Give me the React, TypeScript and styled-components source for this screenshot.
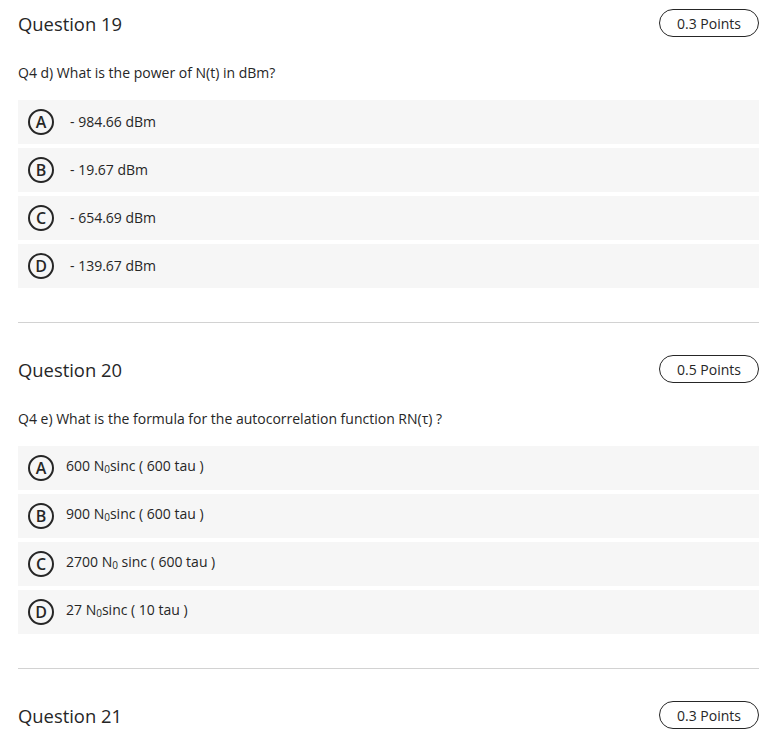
import React from 'react';
import styled, { createGlobalStyle } from 'styled-components';

const GlobalStyle = createGlobalStyle`
    body {
        margin: 0;
        background: #fff;
        font-family: "Open Sans", "Liberation Sans", sans-serif;
        color: #262626;
    }
`;

const Page = styled.div`
    padding: 9px 21px 0 18px;
    display: flex;
    flex-direction: column;
`;

const Section = styled.section`
    display: flex;
    flex-direction: column;
`;

const Header = styled.div`
    display: flex;
    align-items: center;
    justify-content: space-between;
    height: 28px;
`;

const Title = styled.h2`
    margin: 0;
    font-size: 18.4px;
    font-weight: 400;
    color: #262626;
`;

const Points = styled.span`
    box-sizing: border-box;
    width: 100px;
    height: 28px;
    border: 1px solid #262626;
    border-radius: 14px;
    display: flex;
    align-items: center;
    justify-content: center;
    font-size: 14px;
    color: #262626;
`;

const Prompt = styled.p`
    margin: 26px 0 17px;
    font-size: 14px;
    line-height: 20px;
`;

const Options = styled.div`
    display: flex;
    flex-direction: column;
    gap: 4px;
`;

const Option = styled.div<{ $gap: number }>`
    height: 44px;
    background: #f6f6f6;
    display: flex;
    align-items: center;
    gap: ${p => p.$gap}px;
    padding-left: 10px;
    font-size: 14px;
    line-height: 20px;
    padding-bottom: 1px;
    box-sizing: border-box;
`;

const Badge = styled.span`
    box-sizing: border-box;
    width: 26px;
    height: 26px;
    border: 2px solid #262626;
    border-radius: 50%;
    display: flex;
    align-items: center;
    justify-content: center;
    font-size: 16px;
    font-weight: 600;
    line-height: 1;
`;

const Sub = styled.sub`
    font-size: 10px;
    vertical-align: -2px;
`;

const Divider = styled.hr`
    border: none;
    border-top: 1px solid #d2d2d2;
    margin: 34px 0 32px;
`;

type Q = {
    num: number;
    points: string;
    prompt: React.ReactNode;
    gap: number;
    options: React.ReactNode[];
};

const N0 = () => <>N<Sub>0</Sub></>;

const questions: Q[] = [
    {
        num: 19,
        points: '0.3 Points',
        prompt: 'Q4 d) What is the power of N(t) in dBm?',
        gap: 16,
        options: ['- 984.66 dBm', '- 19.67 dBm', '- 654.69 dBm', '- 139.67 dBm'],
    },
    {
        num: 20,
        points: '0.5 Points',
        prompt: 'Q4 e) What is the formula for the autocorrelation function RN(τ) ?',
        gap: 12,
        options: [
            <>600 <N0 />sinc ( 600 tau )</>,
            <>900 <N0 />sinc ( 600 tau )</>,
            <>2700 <N0 /> sinc ( 600 tau )</>,
            <>27 <N0 />sinc ( 10 tau )</>,
        ],
    },
];

export default function App() {
    return (
        <Page>
            <GlobalStyle />
            {questions.map(q => (
                <Section key={q.num}>
                    <Header>
                        <Title>Question {q.num}</Title>
                        <Points>{q.points}</Points>
                    </Header>
                    <Prompt>{q.prompt}</Prompt>
                    <Options>
                        {q.options.map((o, i) => (
                            <Option key={i} $gap={q.gap}>
                                <Badge>{'ABCD'[i]}</Badge>
                                <span>{o}</span>
                            </Option>
                        ))}
                    </Options>
                    <Divider />
                </Section>
            ))}
            <Header>
                <Title>Question 21</Title>
                <Points>0.3 Points</Points>
            </Header>
        </Page>
    );
}
